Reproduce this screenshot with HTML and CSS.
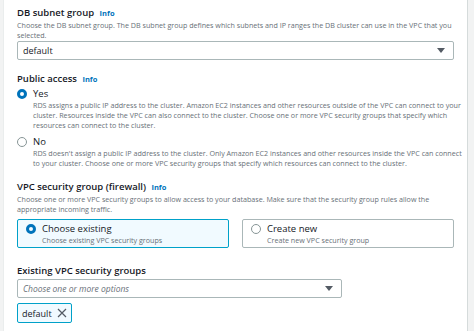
FILE: index.html
```html
<!DOCTYPE html>
<html lang="en">
<head>
    <meta charset="UTF-8">
    <title>Connectivity</title>
    <link rel="stylesheet" href="styles.css">
</head>
<body>
    <div class="panel">
        <div class="field">
            <div class="label">DB subnet group <span class="info">Info</span></div>
            <div class="desc">Choose the DB subnet group. The DB subnet group defines which subnets and IP ranges the DB cluster can use in the VPC that you<br>selected.</div>
            <div class="select">
                <span>default</span>
                <span class="caret"></span>
            </div>
        </div>

        <div class="field">
            <div class="label">Public access <span class="info">Info</span></div>
            <div class="radio-item">
                <span class="radio checked"></span>
                <div>
                    <div class="radio-title">Yes</div>
                    <div class="desc">RDS assigns a public IP address to the cluster. Amazon EC2 instances and other resources outside of the VPC can connect to your<br>cluster. Resources inside the VPC can also connect to the cluster. Choose one or more VPC security groups that specify which<br>resources can connect to the cluster.</div>
                </div>
            </div>
            <div class="radio-item">
                <span class="radio"></span>
                <div>
                    <div class="radio-title">No</div>
                    <div class="desc">RDS doesn't assign a public IP address to the cluster. Only Amazon EC2 instances and other resources inside the VPC can connect<br>to your cluster. Choose one or more VPC security groups that specify which resources can connect to the cluster.</div>
                </div>
            </div>
        </div>

        <div class="field">
            <div class="label">VPC security group (firewall) <span class="info">Info</span></div>
            <div class="desc">Choose one or more VPC security groups to allow access to your database. Make sure that the security group rules allow the<br>appropriate incoming traffic.</div>
            <div class="tiles">
                <div class="tile selected">
                    <span class="radio checked"></span>
                    <div>
                        <div class="radio-title">Choose existing</div>
                        <div class="desc">Choose existing VPC security groups</div>
                    </div>
                </div>
                <div class="tile">
                    <span class="radio"></span>
                    <div>
                        <div class="radio-title">Create new</div>
                        <div class="desc">Create new VPC security group</div>
                    </div>
                </div>
            </div>
        </div>

        <div class="field groups">
            <div class="label">Existing VPC security groups</div>
            <div class="select multi">
                <span class="placeholder">Choose one or more options</span>
                <span class="caret"></span>
            </div>
            <div class="token">
                <span>default</span>
                <svg width="10" height="10" viewBox="0 0 10 10"><path d="M1 1 L9 9 M9 1 L1 9" stroke="#545b64" stroke-width="1.2" fill="none"/></svg>
            </div>
        </div>
    </div>
</body>
</html>
```

FILE: styles.css
```css
:root {
    --text-color: #16191f;
    --muted: #687078;
    --link: #0073bb;
    --border: #aab7b8;
    --selected: #00a1c9;
}

body {
    margin: 0;
    background: #f2f3f3;
    font-family: "Open Sans", "Noto Sans", sans-serif;
    color: var(--text-color);
}

.panel {
    width: 465px;
    height: 331px;
    margin-left: 3px;
    padding: 6px 0 0 13px;
    background: white;
    border-left: 1px solid #eaeded;
    border-right: 1px solid #d5dbdb;
    box-sizing: border-box;
    overflow: hidden;
}

.field {
    width: 437px;
    margin-bottom: 12px;
}

.field.groups {
    margin-top: 16px;
}

.label {
    font-size: 9.5px;
    font-weight: 600;
    line-height: 13px;
}

.info {
    color: var(--link);
    font-size: 7.5px;
    font-weight: 700;
    margin-left: 3px;
}

.desc {
    color: var(--muted);
    font-size: 7.15px;
    line-height: 10px;
    white-space: nowrap;
}

.select {
    margin-top: 1px;
    height: 19px;
    border: 1px solid var(--border);
    border-radius: 2px;
    box-sizing: border-box;
    display: flex;
    align-items: center;
    justify-content: space-between;
    padding: 0 8px 0 5px;
    font-size: 9px;
}

.caret {
    width: 0;
    height: 0;
    border-left: 4px solid transparent;
    border-right: 4px solid transparent;
    border-top: 5px solid #545b64;
}

.radio-item {
    display: flex;
    gap: 6px;
    margin-top: 1px;
    margin-bottom: 5px;
}

.radio-item + .radio-item {
    margin-top: 5px;
}

.radio {
    flex: none;
    width: 10px;
    height: 10px;
    border: 1px solid #879596;
    border-radius: 50%;
    box-sizing: border-box;
    margin-top: 1.5px;
}

.radio.checked {
    border: 3px solid var(--link);
}

.radio-title {
    font-size: 9.5px;
    line-height: 13px;
}

.tiles {
    display: flex;
    gap: 13px;
    margin-top: 5px;
}

.tile {
    flex: 1;
    display: flex;
    gap: 6px;
    padding: 2px 8px;
    border: 1px solid var(--border);
    border-radius: 2px;
}

.tile.selected {
    border-color: var(--selected);
    background: #f1faff;
}

.multi {
    width: 325px;
    margin-top: 2px;
}

.placeholder {
    color: var(--muted);
    font-style: italic;
    font-size: 8.5px;
}

.token {
    margin-top: 5px;
    display: inline-flex;
    align-items: center;
    gap: 5px;
    height: 20px;
    padding: 0 4px;
    border: 1px solid var(--selected);
    background: #f1faff;
    border-radius: 2px;
    box-sizing: border-box;
    font-size: 9px;
}
```
